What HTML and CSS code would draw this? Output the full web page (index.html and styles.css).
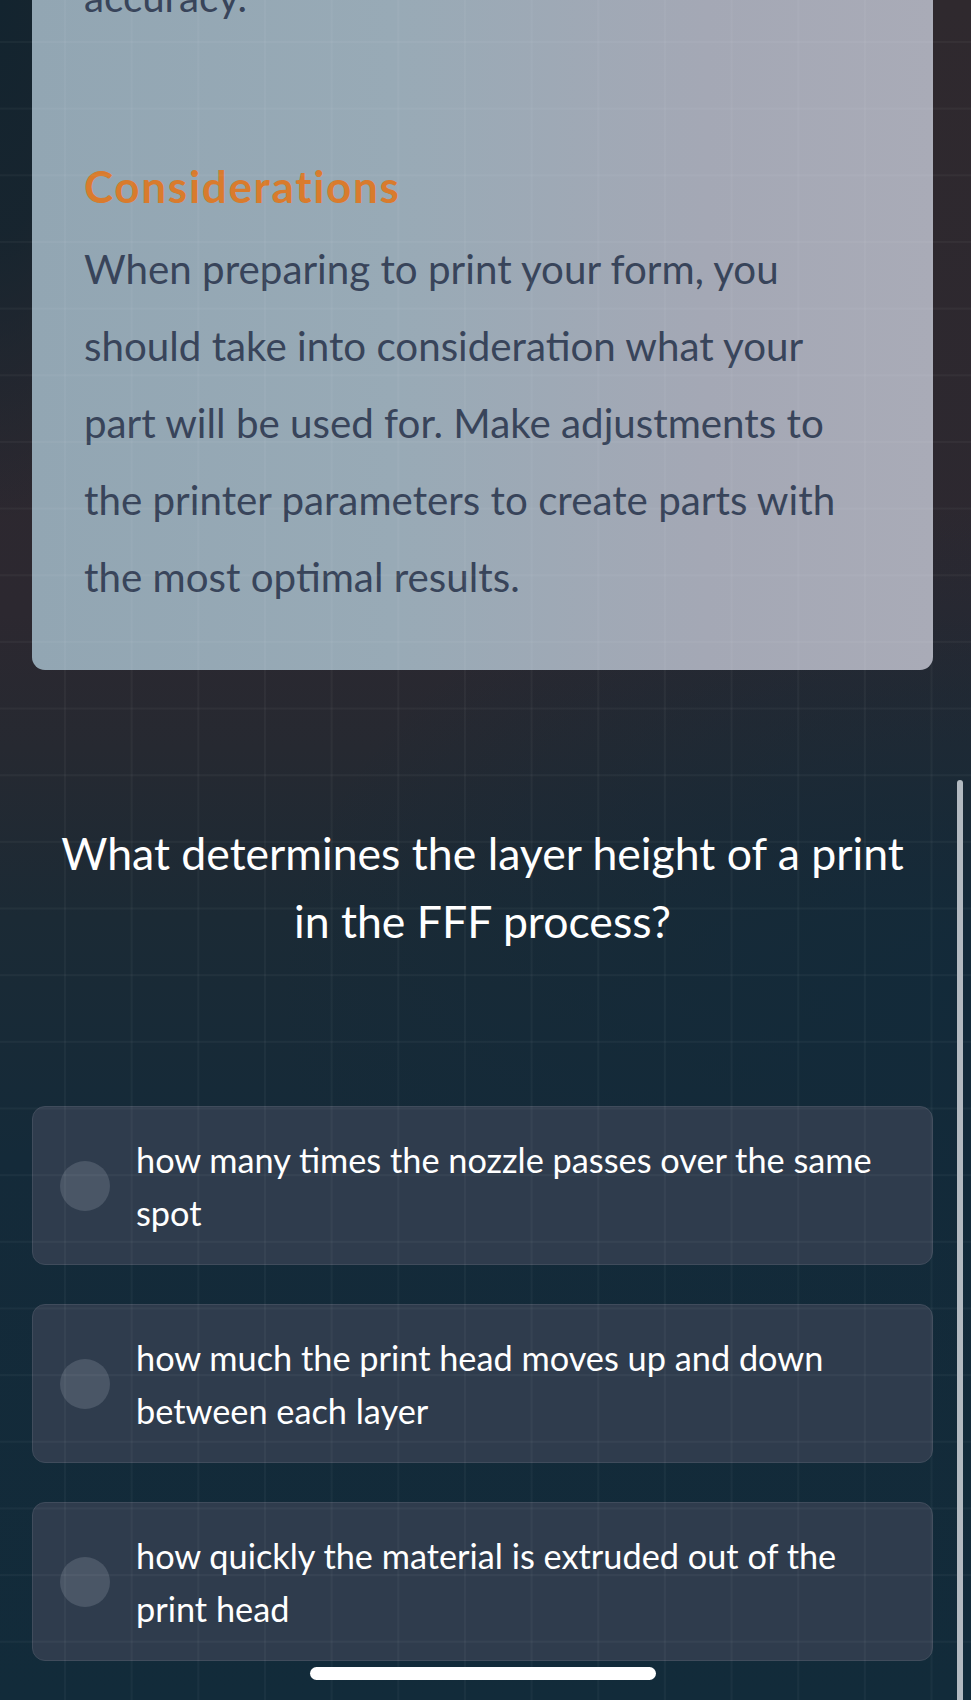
FILE: index.html
```html
<!DOCTYPE html>
<html lang="en">
<head>
<meta charset="utf-8">
<title>Considerations</title>
<link rel="stylesheet" href="styles.css">
</head>
<body>
<main class="screen">
  <section class="info-card">
    <p class="info-text">accuracy.</p>
    <h2 class="info-title">Considerations</h2>
    <p class="info-text info-text--body">When preparing to print your form, you<br>should take into consideration what your<br>part will be used for. Make adjustments to<br>the printer parameters to create parts with<br>the most optimal results.</p>
  </section>

  <h1 class="question">What determines the layer height of a print<br>in the FFF process?</h1>

  <ul class="options">
    <li class="option"><span class="radio"></span><span class="option-text">how many times the nozzle passes over the same<br>spot</span></li>
    <li class="option"><span class="radio"></span><span class="option-text">how much the print head moves up and down<br>between each layer</span></li>
    <li class="option"><span class="radio"></span><span class="option-text">how quickly the material is extruded out of the<br>print head</span></li>
  </ul>
</main>
<div class="grid-overlay"></div>
<div class="scrollbar"></div>
<div class="home-indicator"></div>
</body>
</html>
```

FILE: styles.css
```css
* { box-sizing: border-box; }

html, body {
  margin: 0;
  width: 971px;
  height: 1700px;
  overflow: hidden;
}

body {
  position: relative;
  font-family: Lato, "Noto Sans", sans-serif;
  background:
    radial-gradient(ellipse 160px 520px at 0% 0%, #13242f 0%, rgba(19,36,47,0.85) 45%, rgba(19,36,47,0) 100%),
    radial-gradient(ellipse 700px 500px at 100% 1000px, rgba(18,42,58,0.9) 0%, rgba(18,42,58,0) 100%),
    linear-gradient(180deg, #2f292e 0%, #2c2830 36%, #262931 44%, #1b2a35 54%, #142a39 68%, #122b3a 100%);
}

.screen {
  padding: 0 38px 0 32px;
}

.info-card {
  margin-top: -42px;
  padding: 0 52px 55px;
  border-radius: 0 0 13px 13px;
  background: linear-gradient(90deg, #92a6b3 0%, #98aab6 40%, #a4a8b5 75%, #a9abb7 100%);
}

.info-text {
  margin: 0;
  font-size: 40.3px;
  line-height: 77px;
  color: #38445a;
}

.info-title {
  margin: 125px 0 17px;
  font-size: 44px;
  line-height: 53px;
  font-weight: 700;
  letter-spacing: 1.7px;
  color: #d97b2d;
}

.question {
  margin: 149px 0 151px;
  font-size: 44.6px;
  line-height: 68px;
  font-weight: 400;
  text-align: center;
  color: #ffffff;
}

.options {
  list-style: none;
  margin: 0;
  padding: 0;
  display: flex;
  flex-direction: column;
  gap: 39px;
}

.option {
  display: flex;
  align-items: center;
  gap: 26px;
  height: 159px;
  padding: 0 27px;
  border: 1px solid #404c5c;
  border-radius: 13px;
  background: #2f3c4d;
}

.radio {
  flex: none;
  width: 50px;
  height: 50px;
  border-radius: 50%;
  background: #4a5666;
}

.option-text {
  font-size: 34.3px;
  line-height: 53px;
  color: #ffffff;
}

.grid-overlay {
  position: absolute;
  inset: 0;
  pointer-events: none;
  background-image:
    linear-gradient(to right, rgba(255,255,255,0.035) 2px, transparent 2px),
    linear-gradient(to bottom, rgba(255,255,255,0.035) 2px, transparent 2px);
  background-size: 66.67px 66.67px;
  background-position: 64px 41px;
}

.scrollbar {
  position: absolute;
  left: 957px;
  top: 780px;
  width: 6px;
  height: 930px;
  border-radius: 3px;
  background: #b3bac1;
}

.home-indicator {
  position: absolute;
  left: 310px;
  top: 1667px;
  width: 346px;
  height: 13px;
  border-radius: 7px;
  background: #ffffff;
}
```
